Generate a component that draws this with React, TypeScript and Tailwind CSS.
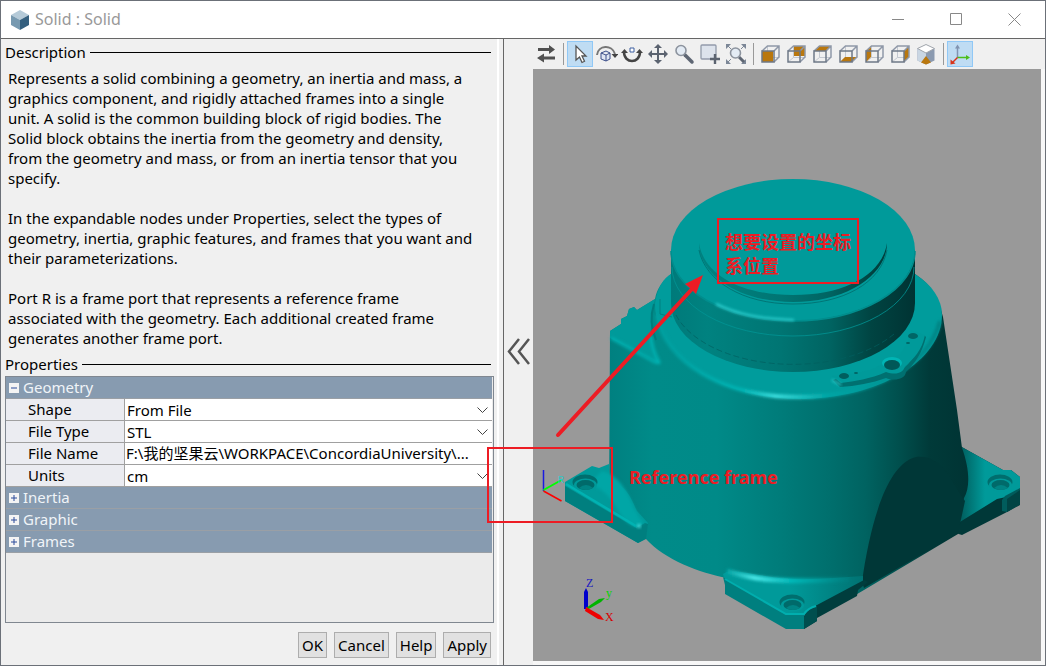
import { useState, type ReactNode } from "react"
import clsx from "clsx"

const DESCRIPTION = [
  "Represents a solid combining a geometry, an inertia and mass, a graphics component, and rigidly attached frames into a single unit. A solid is the common building block of rigid bodies. The Solid block obtains the inertia from the geometry and density, from the geometry and mass, or from an inertia tensor that you specify.",
  "In the expandable nodes under Properties, select the types of geometry, inertia, graphic features, and frames that you want and their parameterizations.",
  "Port R is a frame port that represents a reference frame associated with the geometry. Each additional created frame generates another frame port.",
]

function TitleBar() {
  return (
    <header className="flex h-[37px] shrink-0 items-center bg-white pl-2 pr-[2px] text-[#999999]">
      <svg className="size-[22px]" viewBox="0 0 22 22" aria-hidden="true">
        <path d="M2 6 11 1l9 5-9 5z" fill="#b5cad8" />
        <path d="M2 6l9 5v10l-9-5z" fill="#7799b0" />
        <path d="M20 6l-9 5v10l9-5z" fill="#35607f" />
      </svg>
      <h1 className="ml-1 flex-1 pb-px text-base">Solid : Solid</h1>
      <div className="flex h-full">
        <button aria-label="Minimize" className="grid w-[58px] place-items-center">
          <svg width="13" height="13" stroke="#888888" fill="none"><path d="M0 6.500h12" /></svg>
        </button>
        <button aria-label="Maximize" className="grid w-[58px] place-items-center">
          <svg width="13" height="13" stroke="#888888" fill="none"><path d="M.5.5h11v11H.5z" /></svg>
        </button>
        <button aria-label="Close" className="grid w-[58px] place-items-center">
          <svg width="13" height="13" stroke="#888888" fill="none"><path d="M.5.5l12 12M12.500.5l-12 12" /></svg>
        </button>
      </div>
    </header>
  )
}

function SectionTitle({ children }: { children: string }) {
  return (
    <div className="flex h-6 items-center gap-1 pl-[3px] pr-[6px]">
      <h2>{children}</h2>
      <span className="h-px flex-1 bg-black" />
    </div>
  )
}

function GroupRow({ label, open, onToggle }: { label: string; open: boolean; onToggle: () => void }) {
  return (
    <button
      onClick={onToggle}
      aria-expanded={open}
      className="flex h-[22px] w-full items-center gap-1 border-b border-[#9a9fa5] bg-[#879bb0] pl-[3px] text-left text-[#f0f4f8]"
    >
      <svg width="10" height="10" aria-hidden="true">
        <rect width="10" height="10" fill="#f4f4f4" />
        <path d={open ? "M2 5h6" : "M2 5h6M5 2v6"} stroke="#2a4a9a" />
      </svg>
      {label}
    </button>
  )
}

function FieldRow({ id, label, children }: { id: string; label: string; children: ReactNode }) {
  return (
    <div className="flex h-[22px] border-b border-[#a0a0a0] bg-white">
      <label htmlFor={id} className="flex w-[119px] shrink-0 items-center border-r border-[#a0a0a0] bg-[#ebecf1] pl-[22px]">
        {label}
      </label>
      {children}
    </div>
  )
}

function SelectRow({ id, label, options }: { id: string; label: string; options: string[] }) {
  return (
    <FieldRow id={id} label={label}>
      <div className="relative flex-1">
        <select id={id} className="h-full w-full appearance-none bg-white pb-[2px] pl-[2px] outline-none">
          {options.map((o) => (
            <option key={o}>{o}</option>
          ))}
        </select>
        <svg className="pointer-events-none absolute right-1 top-2" width="11" height="7" fill="none" stroke="#444444" aria-hidden="true">
          <path d="M.5.5l5 5 5-5" />
        </svg>
      </div>
    </FieldRow>
  )
}

function PropertyTree() {
  const [open, setOpen] = useState(true)
  return (
    <div className="mx-[3px] flex-1 border border-[#808790] bg-[#ebebeb] pr-px">
      <GroupRow label="Geometry" open={open} onToggle={() => setOpen(!open)} />
      {open && (
        <>
          <SelectRow id="shape" label="Shape" options={["From File", "Brick", "Sphere"]} />
          <SelectRow id="file-type" label="File Type" options={["STL", "STEP"]} />
          <FieldRow id="file-name" label="File Name">
            <input
              id="file-name"
              readOnly
              value="F:\我的坚果云\WORKPACE\ConcordiaUniversity\..."
              className="min-w-0 flex-1 pl-px outline-none"
            />
          </FieldRow>
          <SelectRow id="units" label="Units" options={["cm", "m", "mm"]} />
        </>
      )}
      {["Inertia", "Graphic", "Frames"].map((g) => (
        <GroupRow key={g} label={g} open={false} onToggle={() => {}} />
      ))}
    </div>
  )
}

function SettingsPane() {
  return (
    <section className="flex w-[498px] shrink-0 flex-col border-r-2 border-white pl-px pt-px">
      <SectionTitle>Description</SectionTitle>
      <div className="space-y-5 pl-[6px] pr-[22px] pt-1 leading-5">
        {DESCRIPTION.map((p) => (
          <p key={p}>{p}</p>
        ))}
      </div>
      <div className="pt-1">
        <SectionTitle>Properties</SectionTitle>
      </div>
      <PropertyTree />
      <div className="flex gap-[7px] self-end pb-[7px] pr-[6px] pt-[9px]">
        {["OK", "Cancel", "Help", "Apply"].map((b) => (
          <button key={b} className="h-[26px] border border-[#adadad] bg-[#e1e1e1] px-[3px]">
            {b}
          </button>
        ))}
      </div>
    </section>
  )
}

/* toolbar glyphs, all drawn in a 24x24 box */

const CUBE_FACES: Record<string, string> = {
  Front: "M4 9h11v11H4z",
  Back: "M10 4h11v10H10z",
  Top: "M4 9l5-5h12l-5 5z",
  Bottom: "M4 20l5-5h12l-5 5z",
  Left: "M4 9l5-5v11l-5 5z",
  Right: "M16 9l5-5v11l-5 5z",
}

function CubeIcon({ face }: { face: string }) {
  return (
    <svg width="24" height="24" fill="none" aria-hidden="true">
      <path d="M9.500 4v11.500h12M9.500 15.500 4 20" stroke="#c3c8d0" />
      <path d={CUBE_FACES[face]} fill="#b9770e" />
      <path d="M4 9l5.500-5h11.500v11l-5 5M16 9l5-5" stroke="#8f98a8" strokeWidth="1.500" />
      <path d="M4 9h12v11H4z" stroke="#6e7887" strokeWidth="1.500" />
    </svg>
  )
}

const TOOLS: { name: string; active?: boolean; icon: ReactNode }[] = [
  {
    name: "Select",
    active: true,
    icon: <path d="M8 4v14l3.500-3 2.500 5.500 2.500-1.200-2.500-5.300h4z" fill="#ffffff" stroke="#555555" strokeWidth="1.300" />,
  },
  {
    name: "Rotate",
    icon: (
      <>
        <path d="M3 13C4 3 18 2 21 12" stroke="#777777" strokeWidth="2" fill="none" />
        <path d="M17.500 12h7L21 16z" fill="#444444" />
        <path d="M7 11l5-2 4 2v6l-4 2-5-2zM7 11l5 2 4-2M12 13v6" stroke="#3d4f8a" fill="#dfe5f2" />
      </>
    ),
  },
  {
    name: "Roll",
    icon: (
      <>
        <path d="M4 10c0 12 16 12 16 0" stroke="#444444" strokeWidth="2.500" fill="none" />
        <path d="M1 11l3.500-4L8 11zM16 11l3.500-4 3.500 4z" fill="#444444" />
        <path d="M10 6h4v4h-4z" fill="#ffffff" stroke="#3d5fa0" />
      </>
    ),
  },
  {
    name: "Pan",
    icon: (
      <>
        <path d="M12 4v16M4 12h16" stroke="#5b6370" strokeWidth="2" />
        <path d="M12 2l4 4H8zM12 22l4-4H8zM2 12l4-4v8zM22 12l-4-4v8z" fill="#5b6370" />
      </>
    ),
  },
  {
    name: "Zoom",
    icon: (
      <>
        <path d="M13 13l7 7" stroke="#5e6673" strokeWidth="3.500" strokeLinecap="round" />
        <circle cx="9" cy="8.500" r="5" fill="#e3ebf4" stroke="#8c939e" strokeWidth="1.600" />
      </>
    ),
  },
  {
    name: "Zoom region",
    icon: (
      <>
        <rect x="3" y="3" width="15" height="14" rx="1" fill="#dde3ec" stroke="#929baa" strokeWidth="1.300" />
        <path d="M17 12v10M12 17h10" stroke="#5b6370" strokeWidth="2.400" />
      </>
    ),
  },
  {
    name: "Fit view",
    icon: (
      <>
        <path d="M2 7V2h5zM17 2h5v5zM2 17v5h5zM17 22h5v-5z" fill="#7c8797" />
        <path d="M3 3l4 4M21 3l-4 4M3 21l4-4" stroke="#7c8797" />
        <path d="M15 15l5 5" stroke="#5e6673" strokeWidth="3" />
        <circle cx="11.500" cy="11" r="5" fill="#e3ebf4" stroke="#8c939e" strokeWidth="1.600" />
      </>
    ),
  },
]

function ToolButton({ name, active, children }: { name: string; active?: boolean; children: ReactNode }) {
  return (
    <button
      aria-label={name}
      title={name}
      aria-pressed={active}
      className={clsx("grid size-[26px] place-items-center border", active ? "border-[#90c8f6] bg-[#bfdcf3]" : "border-transparent")}
    >
      {children}
    </button>
  )
}

function Separator() {
  return (
    <span className="flex w-2 justify-center">
      <span className="h-[22px] w-px bg-[#999999]" />
    </span>
  )
}

function Toolbar() {
  return (
    <div className="flex h-[30px] shrink-0 items-center">
      <ToolButton name="Swap layout">
        <svg width="24" height="24" fill="#505050" aria-hidden="true">
          <path d="M4 6h11V3l6 4.500-6 4.500V9H4zM21 14.500H10v-3L3 16l7 4.500v-3h11z" />
        </svg>
      </ToolButton>
      <Separator />
      {TOOLS.map((t) => (
        <ToolButton key={t.name} name={t.name} active={t.active}>
          <svg width="24" height="24" aria-hidden="true">{t.icon}</svg>
        </ToolButton>
      ))}
      <Separator />
      {Object.keys(CUBE_FACES).map((face) => (
        <ToolButton key={face} name={`${face} view`}>
          <CubeIcon face={face} />
        </ToolButton>
      ))}
      <ToolButton name="Isometric view">
        <svg width="24" height="24" aria-hidden="true">
          <path d="M3.500 6.500v12l8.500 4 8.500-4v-12L12 10z" fill="#8b9ab0" />
          <path d="M3.500 6.500v12l8.500 4V10z" fill="#c9d6e3" />
          <path d="M3.500 6.500 12 2.500l8.500 4L12 11z" fill="#ffffff" stroke="#a0a5ac" />
          <path d="M12 14l5 6.500-5 2-5-2z" fill="#b9770e" />
        </svg>
      </ToolButton>
      <Separator />
      <ToolButton name="Show frames" active>
        <svg width="24" height="24" fill="none" strokeWidth="1.500" aria-hidden="true">
          <path d="M9.500 16V5" stroke="#8093b0" />
          <path d="M9.500 2.500l2.500 4H7z" fill="#8093b0" />
          <path d="M9.500 15.500H18" stroke="#4cbf1a" />
          <path d="M22 15.500 18 18v-5z" fill="#4cbf1a" />
          <path d="M9.500 15.500 5 20" stroke="#d8331a" />
          <path d="M2.500 22.500v-5l5 4z" fill="#d8331a" />
        </svg>
      </ToolButton>
    </div>
  )
}

function BoltHole({ x, y }: { x: number; y: number }) {
  return (
    <g>
      <ellipse cx={x} cy={y} rx="12.500" ry="7.500" fill="#006e6e" />
      <ellipse cx={x + 0.5} cy={y + 3} rx="11.500" ry="6.500" fill="#009a9a" />
      <ellipse cx={x + 0.5} cy={y + 3} rx="9" ry="5" fill="#006a6a" />
      <path d={`M${x - 6} ${y + 6}q7-6 14 0q-7 4-14 0`} fill="#008484" />
    </g>
  )
}

function Scene() {
  return (
    <svg viewBox="533 69 508 592" className="relative z-10 block h-full w-full overflow-visible" role="img" aria-label="Solid preview">
      <defs>
        <linearGradient id="body" gradientUnits="userSpaceOnUse" x1="610" y1="0" x2="965" y2="0">
          <stop offset="0" stopColor="#008080" />
          <stop offset=".12" stopColor="#008b89" />
          <stop offset=".3" stopColor="#008a88" />
          <stop offset=".48" stopColor="#007c7a" />
          <stop offset=".62" stopColor="#006f6d" />
          <stop offset=".72" stopColor="#006361" />
          <stop offset=".82" stopColor="#004e4c" />
          <stop offset=".9" stopColor="#003a39" />
          <stop offset="1" stopColor="#003434" />
        </linearGradient>
        <linearGradient id="neck" gradientUnits="userSpaceOnUse" x1="671" y1="0" x2="915" y2="0">
          <stop offset="0" stopColor="#007a7a" />
          <stop offset=".15" stopColor="#008280" />
          <stop offset=".45" stopColor="#007573" />
          <stop offset=".65" stopColor="#006462" />
          <stop offset=".82" stopColor="#004442" />
          <stop offset="1" stopColor="#003333" />
        </linearGradient>
        <linearGradient id="rim" gradientUnits="userSpaceOnUse" x1="655" y1="0" x2="943" y2="0">
          <stop offset="0" stopColor="#009e9e" />
          <stop offset=".3" stopColor="#00b4b4" />
          <stop offset=".42" stopColor="#3fe0e0" />
          <stop offset=".6" stopColor="#00a6a6" />
          <stop offset="1" stopColor="#008282" />
        </linearGradient>
        <linearGradient id="foot" gradientUnits="userSpaceOnUse" x1="725" y1="0" x2="860" y2="0">
          <stop offset="0" stopColor="#00a0a0" />
          <stop offset=".22" stopColor="#4ae8e8" />
          <stop offset=".5" stopColor="#00b8b8" />
          <stop offset="1" stopColor="#008c8c" stopOpacity="0" />
        </linearGradient>
        <linearGradient id="pad" gradientUnits="userSpaceOnUse" x1="962" y1="0" x2="985" y2="0">
          <stop offset="0" stopColor="#006262" />
          <stop offset="1" stopColor="#009a9a" />
        </linearGradient>
        <linearGradient id="footTop" gradientUnits="userSpaceOnUse" x1="790" y1="0" x2="864" y2="0">
          <stop offset="0" stopColor="#009a9a" />
          <stop offset="1" stopColor="#007272" />
        </linearGradient>
        <filter id="soft" x="-20%" y="-50%" width="140%" height="200%">
          <feGaussianBlur stdDeviation="1.500" />
        </filter>
      </defs>

      {/* right mounting foot */}
      <path d="M960 446l43 24h8l9 7v28l-13 7-45 23-10-3z" fill="#003838" />
      <path d="M960 446l43 24h8l9 7v13l-14 7-9 2-42 26z" fill="url(#pad)" />
      <path d="M1002 500l3-4 15-8v16l-13 8-5-1z" fill="#005c5c" />
      <path d="M1007 512v-13l13-9v14z" fill="#004444" />
      <BoltHole x={1000} y={482} />

      {/* housing */}
      <path
        d="M610 331l11-7v-5l6-3 2-7 5-2 3 3 18-11C657 287 664 280 671 274h244c13 9 22 18 28 43l14 93 5 38c8 22 8 40 2 50l-6 28v8l-94 56-34 20-103-32C700 573 665 560 646 539l-37-30z"
        fill="url(#body)"
      />
      <path d="M610 331l11-7v-5l6-3 2-7 5-2 3 3 18-11c-6 22-6 44 4 64l-49-25z" fill="#009a9a" />
      <path d="M611 338l42 23q7 3 6 1-7-13-8-26" fill="none" stroke="#00b0b0" strokeWidth="3" filter="url(#soft)" />
      <path d="M862 582c8-56 24-118 54-125 28-3 38 30 49 44l-7 32-94 55z" fill="#003737" />

      {/* shoulder and rim */}
      <path d="M655 304C657 287 664 278 671 274h244c17 11 27 25 27 41 0 45-62 84-144 84S655 352 655 304z" fill="#009c9c" />
      <path d="M657 315c8 47 66 82 141 82 73 0 130-30 142-76" fill="none" stroke="url(#rim)" strokeWidth="4" filter="url(#soft)" />
      <path d="M654 304c-4 12-3 24 2 36" fill="none" stroke="#007c7c" strokeWidth="2" />
      <path d="M660 299v15l12 3" fill="none" stroke="#008080" />

      {/* neck */}
      <path d="M671 250v53a122 69 0 0 0 244 0v-53z" fill="url(#neck)" />
      <path d="M676 315a122 69 0 0 0 218 19" fill="none" stroke="#005e5e" strokeDasharray="6 3" strokeWidth=".7" />
      <ellipse cx="793" cy="250" rx="122" ry="71" fill="#009a9a" />
      <path d="M671 251a122 70 0 0 0 244 0" fill="none" stroke="#008e8e" strokeWidth="1.500" />
      <path d="M716 304c22 11 46 15 78 16" fill="none" stroke="#42e6e6" strokeWidth="1.500" filter="url(#soft)" />
      <path d="M672 267a121 69 0 0 0 242 0" fill="none" stroke="#009494" strokeWidth=".8" />

      {/* recessed disc */}
      <path d="M699 243c0 32 40 59 94 59s94-27 94-59c-5 32-42 52-94 52s-89-20-94-52z" fill="url(#neck)" />
      <path d="M699 250c6 31 44 54 94 54s88-21 94-54" fill="none" stroke="#006c6c" strokeWidth=".8" />

      {/* sensor bracket */}
      <path d="M833 380l6-2c24 0 40-6 47-10h18c8-6 18-25 20-33l2 2c-4 17-12 27-20 35-1 8-13 9-20 6-14 5-30 8-46 9z" fill="#007070" />
      <path d="M832 376c24-2 44-6 53-14l15-8c7-9 10-16 11-24l14 5c-3 15-11 24-20 31-2 8-10 9-19 6-16 7-31 9-45 11z" fill="#009a9a" />
      <path d="M832 380l9 5" stroke="#30d0d0" strokeWidth="2" filter="url(#soft)" />
      <ellipse cx="892" cy="363" rx="10" ry="6" fill="#00b5b5" />
      <ellipse cx="892" cy="365" rx="8" ry="5" fill="#005757" />
      <ellipse cx="844" cy="376" rx="5" ry="3" fill="#005e5e" />
      <ellipse cx="913" cy="336" rx="5" ry="3" fill="#006666" />
      <ellipse cx="856" cy="373" rx="2" ry="1" fill="#006464" />
      <ellipse cx="908" cy="343" rx="2" ry="1" fill="#006464" />

      {/* left mounting foot */}
      <path d="M565 482l27-16 7 2 10-4v16c18 6 22 18 28 31l11 12-3 16-7 4-73-42z" fill="#009a9a" />
      <path d="M565 486l71 42 9-5 3 1-2 15-8 4-73-42z" fill="#007f7f" />
      <path d="M602 471c11 3 18 10 24 20 6 11 9 23 18 32l-9 4c-13-6-15-15-22-25-8-11-15-15-24-18z" fill="#00a6a6" filter="url(#soft)" />
      <path d="M566 484l70 42" stroke="#00b2b2" strokeWidth="2.500" />
      <circle cx="639" cy="526" r="2" fill="#45dede" filter="url(#soft)" />
      <BoltHole x={585} y={482} />

      {/* front mounting foot */}
      <path d="M723 574c5-5 20-2 42 2 32 6 66 2 98 0v10l-47 22-12 8h-20l-59-34z" fill="url(#footTop)" />
      <path d="M864 580l-47 25-13 11v13l13-8v-3l40-22 1-6 10-8z" fill="#003d3d" />
      <path d="M723 577l63 38h18v14h-18l-61-35v-9z" fill="#007f7f" />
      <path d="M804 617q2-7 13-12v16l-13 8z" fill="#004e4e" />
      <path d="M725 579l61 35h18q4-6 12-8" fill="none" stroke="#00aeae" strokeWidth="2" />
      <path d="M727 571c26 9 54 12 122 8" fill="none" stroke="url(#foot)" strokeWidth="5" filter="url(#soft)" />
      <BoltHole x={792} y={602} />

      {/* reference frame triad */}
      <g fill="none" strokeWidth="1.500">
        <path d="M543.500 491v-21" stroke="#1a1ae0" />
        <path d="M543.500 491l18 10" stroke="#ff0000" />
        <path d="M543.500 490l18-10" stroke="#00ff00" strokeWidth="2" />
      </g>
      <text x="558" y="483" className="fill-[#2fc8c8] font-['Liberation_Mono'] text-[10px]">R</text>

      {/* world axes */}
      <path d="M584 609v-17l2-4 2 4v17z" fill="#0000cc" />
      <path d="M586 608l13-9 6-1-4 4-14 8z" fill="#00b400" />
      <path d="M586 607l14 8 4 5-6-1-13-8z" fill="#ee0000" />
      <g className="font-['Liberation_Serif'] text-[12px]">
        <text x="586" y="587" fill="#1a1ac0">Z</text>
        <text x="606" y="597" fill="#00d400">y</text>
        <text x="605" y="621" fill="#d80000">X</text>
      </g>

      {/* annotations */}
      <g fill="none" stroke="#ed1c24" strokeWidth="2">
        <rect x="718" y="219" width="140" height="64" />
        <rect x="488" y="448" width="124" height="74" />
        <path d="M558 435 692 289" strokeWidth="4" strokeLinecap="round" />
      </g>
      <path d="M703 275l-7 19-5-5-6-5z" fill="#ed1c24" />
      <g className="fill-[#ed1c24] text-[18px] font-bold">
        <text x="725" y="249">想要设置的坐标</text>
        <text x="725" y="273">系位置</text>
        <text x="629" y="484">Reference frame</text>
      </g>
    </svg>
  )
}

function ViewerPane() {
  return (
    <section className="flex min-w-0 flex-1 border-l border-[#666666]">
      <button aria-label="Collapse settings" className="grid w-[29px] shrink-0 place-items-center">
        <svg width="24" height="28" fill="none" stroke="#555555" strokeWidth="2.500" aria-hidden="true">
          <path d="M12 1 2 13.500 12 26M22 1 12 13.500 22 26" />
        </svg>
      </button>
      <div className="flex min-w-0 flex-1 flex-col">
        <Toolbar />
        <div className="min-h-0 flex-1 border-b-4 border-r-4 border-[#f7f7f7] bg-[#999999]">
          <Scene />
        </div>
      </div>
    </section>
  )
}

export default function App() {
  return (
    <div className="flex h-screen min-h-[600px] flex-col border border-[#6b7078] bg-[#f0f0f0] font-['Noto_Sans','Noto_Sans_CJK_SC',sans-serif] text-[15px] text-black">
      <TitleBar />
      <main className="flex min-h-0 flex-1 gap-1 border-t border-[#666666]">
        <SettingsPane />
        <ViewerPane />
      </main>
    </div>
  )
}
